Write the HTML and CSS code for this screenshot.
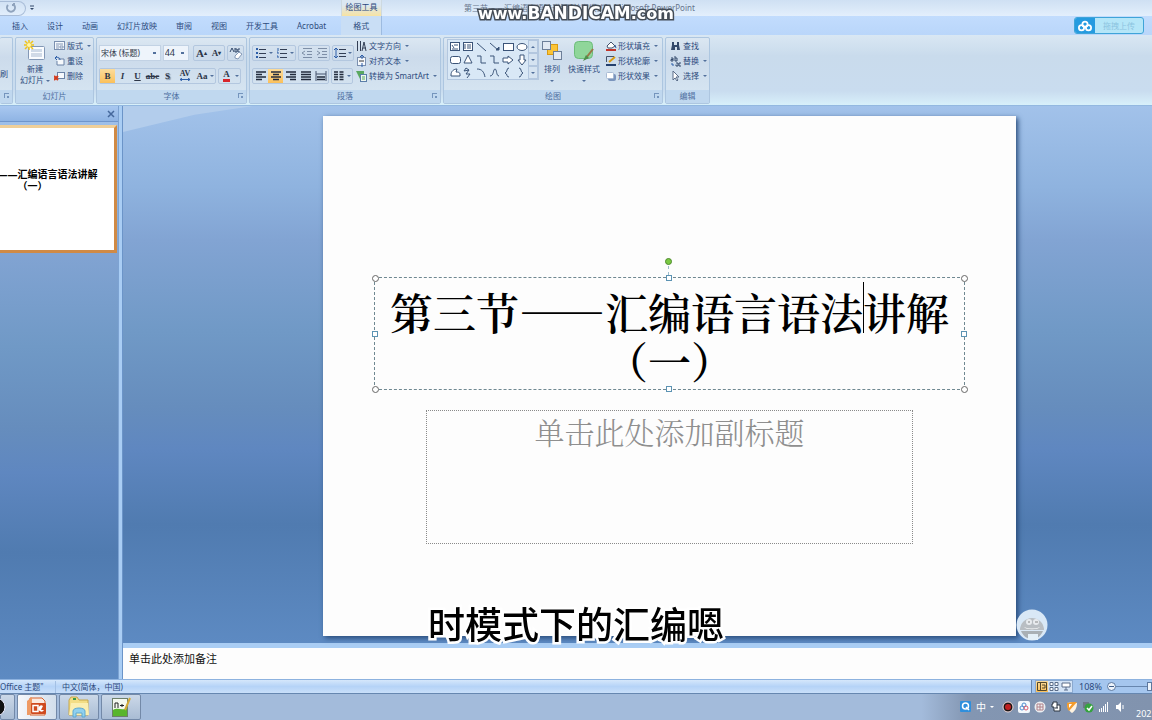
FILE: index.html
```html
<!DOCTYPE html>
<html lang="zh-CN">
<head>
  <meta charset="UTF-8">
  <meta name="viewport" content="width=device-width, initial-scale=1.0">
  <title>Microsoft PowerPoint</title>
  <link rel="stylesheet" href="styles.css">
</head>
<body>
  <!-- Title bar -->
  <header class="title-bar">
    <div class="quick-access">
      <button aria-label="恢复"><svg width="12" height="12" viewBox="0 0 12 12"><path d="M3 3a4 4 0 1 0 6 0M9 3V1M9 3H7" fill="none" stroke="#8fa3bd" stroke-width="2"/></svg></button>
    </div>
    <button class="customize" aria-label="自定义"><svg width="6" height="6" viewBox="0 0 6 6"><path d="M1 1h4" stroke="#33496b"/><path d="M1 3h4l-2 2z" fill="#33496b"/></svg></button>
    <div class="context-title">绘图工具</div>
    <div class="window-title">第三节——汇编语言语法讲解 [兼容模式] - Microsoft PowerPoint</div>
  </header>

  <!-- Ribbon tabs -->
  <nav class="tabs">
    <a href="#">插入</a>
    <a href="#">设计</a>
    <a href="#">动画</a>
    <a href="#">幻灯片放映</a>
    <a href="#">审阅</a>
    <a href="#">视图</a>
    <a href="#">开发工具</a>
    <a href="#">Acrobat</a>
    <a href="#" class="context-tab">格式</a>
    <button class="upload">
      <span class="upload-icon"><svg width="14" height="12" viewBox="0 0 16 12"><g fill="none" stroke="#fff" stroke-width="2"><circle cx="8" cy="4" r="3"/><circle cx="4" cy="8" r="3"/><circle cx="12" cy="8" r="3"/></g></svg></span>
      <span class="upload-text">拖拽上传</span>
    </button>
  </nav>

  <!-- Ribbon -->
  <div class="ribbon">
    <section class="group group-clipboard">
      <div class="group-body"><span class="cut-label">刷</span></div>
      <div class="group-label"><i class="launcher"></i></div>
    </section>

    <section class="group group-slides">
      <div class="group-body">
        <button class="big-button">
          <svg width="22" height="22" viewBox="0 0 22 22"><rect x="4.500" y="6.500" width="16" height="13" rx="1" fill="#fafcff" stroke="#8398b6"/><rect x="7" y="9" width="11" height="3" fill="#cfdae8"/><path d="M7 14h11M7 16h11" stroke="#a7b8cf"/><path d="M5 0v10M0 5h10M1 1l8 8M9 1L1 9" stroke="#f0c419" stroke-width="1.500"/><circle cx="5" cy="5" r="2" fill="#fff6a8"/></svg>
          <span>新建</span>
          <span>幻灯片 <i class="arrow"></i></span>
        </button>
        <div class="menu-column">
          <button><svg width="12" height="10" viewBox="0 0 12 10"><rect x=".5" y=".5" width="10" height="8" fill="#f6f9fd" stroke="#7b90b0"/><path d="M2 3h7M2 5h3M2 7h3M6 5h3v2H6z" stroke="#8296b5" fill="none"/></svg>版式 <i class="arrow"></i></button>
          <button><svg width="12" height="10" viewBox="0 0 12 10"><path d="M4 3h6v6H3V5" fill="#f6f9fd" stroke="#6b82a6"/><path d="M6 4C6 1 3 1 1 2M1 2l2-2M1 2l2 2" fill="none" stroke="#2d5ea8"/></svg>重设</button>
          <button><svg width="12" height="10" viewBox="0 0 12 10"><rect x="3.500" y="1.500" width="7" height="6" fill="#f6f9fd" stroke="#6b82a6"/><path d="M0 5l4 4M4 5L0 9" stroke="#d43a1c" stroke-width="2"/></svg>删除</button>
        </div>
      </div>
      <div class="group-label">幻灯片</div>
    </section>

    <section class="group group-font">
      <div class="group-body rows">
        <div class="row">
          <select class="font-name" aria-label="字体"><option>宋体 (标题)</option></select>
          <select class="font-size" aria-label="字号"><option>44</option></select>
          <div class="tool-set gap-left">
            <button class="serif large" aria-label="增大字号">A<sup>▴</sup></button>
            <button class="serif" aria-label="缩小字号">A<sup>▾</sup></button>
          </div>
          <div class="tool-set">
            <button aria-label="清除格式"><svg width="14" height="14" viewBox="0 0 14 14"><path d="M1 6l2-4 2 4M6 2v4h2V3H6M11 3H9v3h2" fill="none" stroke="#33496b"/><path d="M6 10l4-4 3 2-4 5-3-1z" fill="#fff" stroke="#8398b6"/></svg></button>
          </div>
        </div>
        <div class="row">
          <div class="tool-set">
            <button class="serif active"><b>B</b></button>
            <button class="serif"><i>I</i></button>
            <button class="serif"><u>U</u></button>
            <button class="serif"><s>abc</s></button>
            <button class="serif shadow"><b>S</b></button>
            <button class="serif small-text wide" aria-label="字符间距">AV<svg width="12" height="3" viewBox="0 0 12 3"><path d="M1 1.500h10M3 0L1 1.500 3 3M9 0l2 1.500L9 3" fill="none" stroke="#2d5ea8"/></svg></button>
            <button class="serif wide">Aa<i class="arrow"></i></button>
          </div>
          <div class="tool-set">
            <button class="serif font-color" aria-label="字体颜色"><b>A</b></button>
            <button class="narrow" aria-label="更多颜色"><i class="arrow"></i></button>
          </div>
        </div>
      </div>
      <div class="group-label">字体<i class="launcher"></i></div>
    </section>

    <section class="group group-paragraph">
      <div class="group-body">
        <div class="rows">
          <div class="row">
            <div class="tool-set">
              <button aria-label="项目符号"><svg width="12" height="10" viewBox="0 0 12 10"><path d="M1 1h2M1 5h2M1 9h2" stroke="#2d5ea8" stroke-width="2"/><path d="M4 1.500h7M4 5.500h7M4 9.500h7" stroke="#333f55"/></svg></button>
              <button class="narrow" aria-label="更多符号"><i class="arrow"></i></button>
              <button aria-label="编号"><svg width="12" height="10" viewBox="0 0 12 10"><path d="M2 0v3M1 4h1v2M1 8h1v2" stroke="#2d5ea8" fill="none"/><path d="M4 1.500h7M4 5.500h7M4 9.500h7" stroke="#333f55"/></svg></button>
              <button class="narrow" aria-label="更多编号"><i class="arrow"></i></button>
            </div>
            <div class="tool-set">
              <button class="dim" aria-label="减少缩进"><svg width="12" height="10" viewBox="0 0 12 10"><path d="M2 .5h9M6 3.500h5M6 6.500h5M2 9.500h9M4 3L1 5l3 2" stroke="#5b6d89" fill="none"/></svg></button>
              <button class="dim" aria-label="增加缩进"><svg width="12" height="10" viewBox="0 0 12 10"><path d="M2 .5h9M6 3.500h5M6 6.500h5M2 9.500h9M1 3l3 2-3 2" stroke="#5b6d89" fill="none"/></svg></button>
            </div>
            <div class="tool-set">
              <button class="wide" aria-label="行距"><svg width="12" height="12" viewBox="0 0 12 12"><path d="M2 1v10M0 3l2-2 2 2M0 9l2 2 2-2" stroke="#2d5ea8" fill="none"/><path d="M5 2.500h7M5 6.500h7M5 9.500h7" stroke="#333f55"/></svg><i class="arrow"></i></button>
            </div>
          </div>
          <div class="row">
            <div class="tool-set">
              <button aria-label="左对齐"><svg width="12" height="10" viewBox="0 0 12 10"><path d="M1 1h10M1 3.500h6M1 6h10M1 8.500h6" stroke="#222b3c" stroke-width="1.500"/></svg></button>
              <button class="active" aria-label="居中"><svg width="12" height="10" viewBox="0 0 12 10"><path d="M1 1h10M3 3.500h6M1 6h10M3 8.500h6" stroke="#222b3c" stroke-width="1.500"/></svg></button>
              <button aria-label="右对齐"><svg width="12" height="10" viewBox="0 0 12 10"><path d="M1 1h10M5 3.500h6M1 6h10M5 8.500h6" stroke="#222b3c" stroke-width="1.500"/></svg></button>
              <button aria-label="两端对齐"><svg width="12" height="10" viewBox="0 0 12 10"><path d="M1 1h10M1 3.500h10M1 6h10M1 8.500h10" stroke="#222b3c" stroke-width="1.500"/></svg></button>
              <button aria-label="分散对齐"><svg width="12" height="10" viewBox="0 0 12 10"><path d="M1 0v10M11 0v10M1 3h10" stroke="#44536c"/><path d="M2 6h8M2 8.500h8" stroke="#222b3c" stroke-width="1.500"/></svg></button>
            </div>
            <div class="tool-set">
              <button class="wide" aria-label="分栏"><svg width="12" height="10" viewBox="0 0 12 10"><path d="M1 1h4M1 3.500h4M1 6h4M1 8.500h4M6.500 1h4M6.500 3.500h4M6.500 6h4M6.500 8.500h4" stroke="#222b3c" stroke-width="1.500"/></svg><i class="arrow"></i></button>
            </div>
          </div>
        </div>
        <div class="menu-column">
          <button><svg width="12" height="12" viewBox="0 0 12 12"><path d="M1.500 1v10M4.500 1v10M6 11l2-9 2 9M7 8h3" stroke="#333f55" fill="none"/></svg>文字方向 <i class="arrow"></i></button>
          <button><svg width="12" height="12" viewBox="0 0 12 12"><rect x="1.500" y="2.500" width="8" height="8" fill="#f6f9fd" stroke="#7b90b0"/><path d="M6 0v4M4 2l2-2 2 2M6 12V8" stroke="#2d5ea8" fill="none"/><path d="M3 6h5" stroke="#333"/></svg>对齐文本 <i class="arrow"></i></button>
          <button><svg width="12" height="12" viewBox="0 0 12 12"><path d="M0 1h8v3H4v5z" fill="#5aa860"/><rect x="4.500" y="4.500" width="6" height="7" fill="#eef7ee" stroke="#5b7da8"/><path d="M6 7h3M6 9h3" stroke="#5aa860"/></svg>转换为 SmartArt <i class="arrow"></i></button>
        </div>
      </div>
      <div class="group-label">段落<i class="launcher"></i></div>
    </section>

    <section class="group group-drawing">
      <div class="group-body">
        <div class="gallery">
          <svg class="shapes" width="80" height="39" viewBox="0 0 80 39">
            <g fill="#fff" stroke="#3b5478">
              <rect x="2.500" y="2.500" width="9" height="8"/>
              <rect x="15.500" y="2.500" width="9" height="8"/>
              <path d="M29 3l9 8M42 3l8 7" fill="none"/>
              <rect x="55.500" y="3.500" width="10" height="7"/>
              <ellipse cx="74" cy="7" rx="5" ry="3.500"/>
              <rect x="2.500" y="16.500" width="10" height="7" rx="2"/>
              <path d="M20 15l4 8h-8z"/>
              <path d="M29 16h4v7h5M42 16h4v7h5" fill="none"/>
              <path d="M55 18h5v-2l5 4-5 4v-2h-5zM72 15h4v5h2l-4 5-4-5h2z"/>
              <path d="M3 35c0-4 3-6 6-6l-1 3c4 0 4 1 4 4H3z"/>
              <path d="M18 28l-2 3 5-1-3 4 4 0-3 4M18 28l3 2" fill="none"/>
              <path d="M29 29c5 0 7 3 8 8M42 36c4 0 3-7 5-7s1 7 4 7M61 28c-3 0-1 4-4 5 3 1 1 4 4 4M71 28c3 0 1 4 4 5-3 1-1 4-4 4" fill="none"/>
            </g>
            <path d="M4 5l2 3M6 5h4M4 9h6M17 4v5M20 4v5M22 4v5M48 10h3V7z" stroke="#3b5478" fill="#3b5478"/>
          </svg>
          <div class="gallery-scroll">
            <button aria-label="上"><i class="arrow up"></i></button>
            <button aria-label="下"><i class="arrow"></i></button>
            <button aria-label="其他"><i class="arrow"></i></button>
          </div>
        </div>
        <button class="big-button">
          <svg width="22" height="22" viewBox="0 0 22 22"><rect x="6.500" y="4.500" width="10" height="10" fill="#fbc436" stroke="#d99a12"/><rect x="1.500" y="1.500" width="8" height="8" fill="#e2e9f2" stroke="#6d7f99"/><rect x="12.500" y="11.500" width="8" height="8" fill="#e2e9f2" stroke="#6d7f99"/></svg>
          <span>排列</span>
          <span><i class="arrow"></i></span>
        </button>
        <button class="big-button style-button">
          <svg width="22" height="22" viewBox="0 0 22 22"><rect x="1.500" y="1.500" width="18" height="17" rx="4" fill="#8fd69a" stroke="#6dbd7b"/><path d="M20 9l-7 9" stroke="#9a7647" stroke-width="2"/><path d="M13 15l3 3-6 3z" fill="#4f8f4b"/></svg>
          <span>快速样式</span>
          <span><i class="arrow"></i></span>
        </button>
        <div class="menu-column">
          <button><svg width="12" height="12" viewBox="0 0 12 12"><path d="M2 6l4-4 4 4-3 2H3z" fill="#fff" stroke="#44536c"/><path d="M10 5l1 3" stroke="#2d5ea8"/><rect x="1" y="9" width="10" height="2" fill="#c2342a"/></svg>形状填充 <i class="arrow"></i></button>
          <button><svg width="12" height="12" viewBox="0 0 12 12"><path d="M1.500 7V1.500H9" fill="none" stroke="#44536c"/><path d="M4 7l6-5" stroke="#d99a12" stroke-width="2"/><rect x="1" y="9" width="10" height="2" fill="#24406e"/></svg>形状轮廓 <i class="arrow"></i></button>
          <button><svg width="12" height="12" viewBox="0 0 12 12"><rect x="3" y="4" width="8" height="7" rx="2" fill="#7b95bd"/><rect x="1.500" y="2.500" width="7" height="6" rx="1" fill="#fff" stroke="#a9bbd4"/></svg>形状效果 <i class="arrow"></i></button>
        </div>
      </div>
      <div class="group-label">绘图<i class="launcher"></i></div>
    </section>

    <section class="group group-editing">
      <div class="group-body">
        <div class="menu-column">
          <button><svg width="12" height="12" viewBox="0 0 12 12"><path d="M2 2h2v3h3V2h2v3l1 5H7V7H5v3H1l1-5z" fill="#33496b"/></svg>查找</button>
          <button><svg width="12" height="12" viewBox="0 0 12 12"><path d="M1 3h2v3H1V4.500h2M5 1v5h2V3H5" fill="none" stroke="#33496b"/><path d="M6 8h2v3H6V9.500M11 8H9v3h2" fill="none" stroke="#33496b"/><path d="M2 8v2h2" fill="none" stroke="#2d5ea8"/></svg>替换 <i class="arrow"></i></button>
          <button><svg width="12" height="12" viewBox="0 0 12 12"><path d="M3 1l6 6H6l2 3-1 1-2-3-2 2z" fill="#fff" stroke="#5b6d89"/></svg>选择 <i class="arrow"></i></button>
        </div>
      </div>
      <div class="group-label">编辑</div>
    </section>
  </div>

  <!-- Workspace: slide list and editor -->
  <main class="workspace">
    <aside class="slide-panel">
      <div class="panel-header">
        <button aria-label="关闭"><svg width="8" height="8" viewBox="0 0 8 8"><path d="M1 1l6 6M7 1L1 7" stroke="#45689c" stroke-width="1.500"/></svg></button>
      </div>
      <div class="thumb-list">
        <div class="thumb">第三节——汇编语言语法讲解<br>（一）</div>
      </div>
    </aside>
    <div class="editor">
      <div class="canvas">
        <div class="slide">
          <div class="title-box">
            <h1>第三节——汇编语言语法<span class="caret"></span>讲解<br>（一）</h1>
            <i class="rotate"></i>
            <i class="handle corner nw"></i><i class="handle n"></i><i class="handle corner ne"></i>
            <i class="handle w"></i><i class="handle e"></i>
            <i class="handle corner sw"></i><i class="handle s"></i><i class="handle corner se"></i>
          </div>
          <div class="subtitle-box">单击此处添加副标题</div>
        </div>
        <div class="mascot">
          <svg width="32" height="32" viewBox="0 0 32 32"><circle cx="16" cy="16" r="15.500" fill="#d9e8f6"/><path d="M4 21a12 12 0 1 1 24 0z" fill="#b9bec3"/><path d="M5 22h22c-2 5-6 8-11 8S7 27 5 22z" fill="#a9b0b5"/><circle cx="13" cy="13" r="3" fill="#e8ebee"/><circle cx="20" cy="13" r="3" fill="#e8ebee"/><path d="M13 12v2M19 13h3" stroke="#888"/><path d="M8 18c5 2 11 2 16 0-2 3-14 3-16 0z" fill="#fff"/><path d="M12 25h10v6H12z" fill="#e4f0f8"/></svg>
        </div>
      </div>
      <div class="notes">单击此处添加备注</div>
    </div>
  </main>

  <!-- Status bar -->
  <div class="status-bar">
    <span class="theme">Office 主题"</span>
    <span class="language">中文(简体，中国)</span>
    <div class="status-right">
      <div class="view-buttons">
        <button class="active" aria-label="普通视图"><svg width="10" height="9" viewBox="0 0 10 9"><path d="M.5.500h9v8h-9zM3.500 1v7M5 3h3v3H5" fill="none" stroke="#54482a"/></svg></button>
        <button aria-label="幻灯片浏览"><svg width="10" height="9" viewBox="0 0 10 9"><path d="M1 .5h3v3H1zM6 .5h3v3H6zM1 5.500h3v3H1zM6 5.500h3v3H6z" fill="#fff" stroke="#5b6d89"/></svg></button>
        <button aria-label="放映"><svg width="10" height="9" viewBox="0 0 10 9"><path d="M1 1h8v4H1zM5 5v3M3 8h4" fill="#fff" stroke="#5b6d89"/></svg></button>
      </div>
      <span class="zoom-value">108%</span>
      <button class="zoom-out" aria-label="缩小"></button>
      <input type="range" class="zoom-range" aria-label="显示比例" min="0" max="100" value="100">
    </div>
  </div>

  <!-- Windows taskbar -->
  <footer class="taskbar">
    <button class="task task-cut" aria-label="录制"><svg width="20" height="20" viewBox="0 0 20 20"><circle cx="10" cy="10" r="9" fill="#111" stroke="#eef"/><circle cx="9" cy="10" r="4" fill="#b32020"/></svg></button>
    <button class="task current" aria-label="PowerPoint"><svg width="22" height="22" viewBox="0 0 22 22"><path d="M4 2h12l3 3v14H4z" fill="#fbe9df" stroke="#d8622a"/><path d="M1 5l5-4v15l-3 3H1z" fill="#ef9a63"/><rect x="5" y="7" width="15" height="11" rx="1" fill="#cf4a1e"/><path d="M7 9.500h5v6H7z" fill="none" stroke="#fff" stroke-width="1.500"/><path d="M17 10a3 3 0 1 0 1 4h-3z" fill="#fff"/></svg></button>
    <button class="task" aria-label="资源管理器"><svg width="24" height="22" viewBox="0 0 24 22"><path d="M2 4l2-3h6l2 3h9v15H2z" fill="#f3dd85" stroke="#c8a84a"/><path d="M4 7h17l1 12H2z" fill="#fbeeb0"/><path d="M6 21v-6c0-4 12-4 12 0v6h-3v-4H9v4z" fill="#8fd0ee" stroke="#5fa8d0"/><path d="M6 3h3" stroke="#3a9a4a" stroke-width="2"/></svg></button>
    <button class="task" aria-label="Notepad++"><svg width="22" height="22" viewBox="0 0 22 22"><rect x="2.500" y="2.500" width="15" height="18" fill="#f4f8ee" stroke="#6d7f6a"/><path d="M3 14c5-3 9 1 14-2v8H3z" fill="#58b52b"/><path d="M5 12V7h3v5M10 9.500h4M12 8v3" fill="none" stroke="#222"/><path d="M20 2l-5 12" stroke="#d4a935" stroke-width="2"/></svg></button>
    <div class="tray">
      <svg width="12" height="12" viewBox="0 0 12 12"><rect width="11" height="11" rx="1" fill="#2f8fdc"/><circle cx="5.500" cy="5" r="3" fill="none" stroke="#fff" stroke-width="1.500"/><path d="M6 6l3 3" stroke="#fff" stroke-width="1.500"/></svg>
      <span class="ime">中</span>
      <i class="arrow light"></i>
      <svg width="12" height="12" viewBox="0 0 12 12"><circle cx="6" cy="6" r="5" fill="#1c1414" stroke="#f0d8d8"/><circle cx="6" cy="6" r="3" fill="#c02020"/></svg>
      <svg width="12" height="12" viewBox="0 0 12 12"><rect width="12" height="12" rx="2" fill="#f4f8fc"/><g fill="none" stroke="#4d8fd0"><circle cx="6" cy="4" r="2"/><circle cx="4" cy="7" r="2"/></g><circle cx="8" cy="7" r="2" fill="none" stroke="#e05a6a"/></svg>
      <svg width="12" height="12" viewBox="0 0 12 12"><circle cx="6" cy="6" r="5.500" fill="#eceff2"/><path d="M3 3h6v6H3zM3 6h6M6 3v6" fill="none" stroke="#b08088"/></svg>
      <svg width="12" height="12" viewBox="0 0 12 12"><path d="M3 1h4v3h3v6H4V6H2V3h1z" fill="#fff" stroke="#2b3440"/><path d="M5 7h3M7 4v3" stroke="#2b3440"/></svg>
      <svg width="12" height="12" viewBox="0 0 12 12"><path d="M1 2l5-1 5 1c0 5-2 8-5 10C3 10 1 7 1 2z" fill="#fff3e0"/><path d="M11 1L3 10C1 8 1 5 1 2l5-1z" fill="#f39b2c"/><path d="M3 3l3 0-3 4z" fill="#fff"/></svg>
      <svg width="12" height="12" viewBox="0 0 12 12"><rect x="1" y="1" width="6" height="6" fill="#6d7886"/><circle cx="7" cy="7" r="4.500" fill="#35a33e"/><path d="M5 7l2 2 3-4" fill="none" stroke="#fff" stroke-width="1.500"/></svg>
      <svg width="12" height="12" viewBox="0 0 12 12"><path d="M1.500 8v3M3.500 7v4M5.500 5v6M7.500 3v8M9.500 1v10" stroke="#fff"/></svg>
      <svg width="12" height="12" viewBox="0 0 12 12"><path d="M2 4h2l3-3v10L4 8H2z" fill="#fff"/><path d="M9 4v4" stroke="#fff"/></svg>
      <span class="clock">202</span>
    </div>
  </footer>

  <!-- Video overlays -->
  <div class="watermark"><small>www.</small>BANDICAM<small>.com</small></div>
  <div class="caption">时模式下的汇编嗯</div>
</body>
</html>
```
FILE: styles.css
```css
:root {
  --ink: #2c4a7c;
  --line: #b3c7df;
  --work: linear-gradient(#a2c2ea 0%, #8fb3df 15%, #82a4d3 25%, #7099c6 42%, #668dbd 56%, #5f87c0 64%, #507bb0 78%, #5d8ac2 100%);
}
* {
  box-sizing: border-box;
}
body {
  display: flex;
  flex-direction: column;
  min-height: 100vh;
  margin: 0;
  overflow: hidden;
  font-family: "Noto Sans", "Noto Sans CJK SC", sans-serif;
  font-size: 8px;
  line-height: 12px;
  text-spacing-trim: space-all;
  color: var(--ink);
  background: #6f98cb;
}
button, select {
  font: inherit;
  color: inherit;
  padding: 0;
  border: none;
  background: none;
  white-space: nowrap;
}
svg {
  display: block;
  flex: none;
}
.arrow {
  display: inline-block;
  flex: none;
  border: 2px solid transparent;
  border-top-color: #52709c;
  border-bottom: none;
  vertical-align: middle;
}
.arrow.up {
  transform: rotate(180deg);
}

/* Title bar */
.title-bar {
  display: flex;
  align-items: center;
  height: 16px;
  background: linear-gradient(#cfe0f3, #e3effc);
}
.quick-access {
  display: flex;
  justify-content: flex-end;
  width: 26px;
  height: 15px;
  padding-right: 8px;
  border: 1px solid #a9bdd8;
  border-left: none;
  border-radius: 0 8px 8px 0;
}
.customize {
  margin-left: 3px;
}
.context-title {
  align-self: stretch;
  width: 41px;
  margin-left: 306px;
  padding-top: 1px;
  text-align: center;
  border: 1px solid #cdd9e0;
  border-width: 0 1px;
  background: linear-gradient(#dbe7f2 30%, #f7e3a2);
}
.window-title {
  margin-left: 82px;
  color: #66758c;
  white-space: nowrap;
}

/* Tabs */
.tabs {
  display: flex;
  align-items: center;
  gap: 19px;
  height: 19px;
  padding: 0 8px 0 12px;
  background: linear-gradient(#c2dcfd, #b9d6fa);
}
.tabs a {
  color: var(--ink);
  text-decoration: none;
  white-space: nowrap;
}
.tabs .context-tab {
  width: 41px;
  margin-left: -4px;
  line-height: 19px;
  text-align: center;
  border-right: 1px solid #9dbbe0;
  background: #c9def5;
}
.upload {
  display: flex;
  width: 70px;
  height: 17px;
  margin-left: auto;
  border: 1px solid #3fa4d8;
  border-radius: 3px;
  background: #b5e6f8;
  overflow: hidden;
}
.upload-icon {
  display: flex;
  align-items: center;
  justify-content: center;
  width: 20px;
  height: 100%;
  background: #259be0;
}
.upload-text {
  flex: 1;
  line-height: 15px;
  color: #8cc4e0;
}

/* Ribbon */
.ribbon {
  display: flex;
  gap: 2px;
  height: 71px;
  padding: 2px 0 1px;
  background: linear-gradient(#d9e7f3, #c9dbec 30%, #c9dcef 80%, #d8f0fa);
  border-bottom: 1px solid #93b8e0;
}
.group {
  display: flex;
  flex-direction: column;
  border: 1px solid #adc6e0;
  border-radius: 2px;
  background: linear-gradient(#dbe7f2, #ccdbeb 30%, #d8e7f3);
}
.group-clipboard {
  width: 13px;
  border-left: none;
}
.group-slides {
  width: 79px;
}
.group-font {
  width: 151px;
}
.group-paragraph {
  width: 192px;
}
.group-drawing {
  width: 220px;
}
.group-editing {
  width: 45px;
}
.group-body {
  display: flex;
  flex: 1;
  min-height: 0;
  padding: 0 2px;
}
.group-label {
  position: relative;
  height: 13px;
  text-align: center;
  color: #4d6f9f;
  background: #c0d8ef;
}
.launcher {
  position: absolute;
  right: 3px;
  top: 3px;
  width: 5px;
  height: 5px;
  border: 1px solid #7595bd;
  border-width: 1px 0 0 1px;
}
.launcher::after {
  content: "";
  position: absolute;
  right: 0;
  bottom: 0;
  width: 2px;
  height: 2px;
  background: #7595bd;
}
.cut-label {
  margin: auto 0 10px -2px;
}
.big-button {
  display: flex;
  flex-direction: column;
  align-items: center;
  justify-content: flex-start;
  width: 34px;
  padding-top: 2px;
  line-height: 11px;
}
.big-button svg {
  margin-bottom: 1px;
}
.menu-column {
  display: flex;
  flex-direction: column;
  justify-content: flex-start;
  padding-left: 2px;
}
.menu-column button {
  display: flex;
  align-items: center;
  gap: 1px;
  height: 15px;
}
.menu-column .arrow {
  margin-left: 3px;
}
.rows {
  display: flex;
  flex-direction: column;
  justify-content: center;
  gap: 7px;
}
.row {
  display: flex;
  gap: 2px;
}
.tool-set {
  display: flex;
  height: 16px;
  border: 1px solid var(--line);
  border-radius: 2px;
}
.tool-set.gap-left {
  margin-left: 2px;
}
.tool-set button {
  display: flex;
  align-items: center;
  justify-content: center;
  width: 15px;
  color: #2d3648;
}
.tool-set button.narrow {
  width: 6px;
}
.tool-set button.wide {
  width: 20px;
  gap: 2px;
}
.tool-set button.active,
.view-buttons .active {
  background: linear-gradient(#fbdc9c, #fbc05a);
}
.tool-set .dim {
  opacity: 0.7;
}
.tool-set .serif {
  font-family: "Liberation Serif", serif;
  font-size: 9px;
  font-weight: bold;
}
.tool-set .serif.large {
  font-size: 11px;
}
.serif sup {
  font-size: 6px;
}
.serif.shadow {
  text-shadow: 1px 1px 1px #68758a;
}
.tool-set .small-text {
  flex-direction: column;
  gap: 0;
  font-size: 8px;
  line-height: 8px;
}
.tool-set button.small-text {
  gap: 0;
}
.font-color b {
  line-height: 10px;
  border-bottom: 3px solid #d8262c;
}
.font-name, .font-size {
  appearance: none;
  height: 16px;
  padding-left: 1px;
  color: #2d3648;
  border: 1px solid #c2d2e4;
  background: linear-gradient(#52709c, #52709c) right 4px center / 3px 2px no-repeat #eef4fb;
}
.font-name {
  width: 66px;
}
.font-size {
  width: 28px;
  font-size: 9px;
}
.gallery {
  display: flex;
  height: 41px;
  margin: 1px 0 0 1px;
  border: 1px solid var(--line);
  background: #d9e8f6;
}
.gallery-scroll {
  display: flex;
  flex-direction: column;
  width: 10px;
}
.gallery-scroll button {
  display: flex;
  flex: 1;
  align-items: center;
  justify-content: center;
  border: 1px solid var(--line);
  background: #d5e3f1;
}
.group-drawing .big-button {
  width: 26px;
}
.group-drawing .style-button {
  width: 38px;
}

/* Workspace */
.workspace {
  display: flex;
  flex: 1;
  min-height: 0;
  background: #a9cdf4;
}
.slide-panel {
  display: flex;
  flex-direction: column;
  width: 119px;
  margin-right: 3px;
  overflow: hidden;
  border-right: 1px solid #7da3d2;
  background: var(--work);
}
.panel-header {
  display: flex;
  align-items: center;
  justify-content: flex-end;
  height: 16px;
  padding-right: 3px;
  background: linear-gradient(#a9c8f0, #8fb4e4);
  border-bottom: 1px solid #7096cc;
}
.thumb-list {
  display: flex;
  justify-content: flex-end;
  padding: 3px 1px;
}
.thumb {
  flex: none;
  width: 169px;
  height: 128px;
  padding-top: 40px;
  font-size: 10px;
  font-weight: bold;
  line-height: 12px;
  text-align: center;
  color: #000;
  border: 3px solid #d08a45;
  border-top-color: #f0cf98;
  background: #fff;
}
.editor {
  display: flex;
  flex: 1;
  flex-direction: column;
  min-width: 0;
  border-left: 1px solid #6b94c8;
}
.canvas {
  position: relative;
  display: flex;
  flex: 1;
  justify-content: center;
  min-height: 0;
  padding: 10px 0 7px 64px;
  background: var(--work);
}
/* Light swoosh in the corner */
.canvas::before {
  content: "";
  position: absolute;
  left: 0;
  top: 0;
  width: 130px;
  height: 26px;
  background: #b3cdec;
  clip-path: polygon(0 0, 100% 0, 55% 34%, 0 100%);
}
.slide {
  position: relative;
  flex: none;
  height: 100%;
  aspect-ratio: 4 / 3;
  padding: 161px 51px 0;
  background: #fdfdfd;
  box-shadow: 2px 2px 5px #274a78;
}
.title-box {
  position: relative;
  height: 113px;
  padding-top: 9px;
  border: 1px dashed #6f8891;
}
.title-box h1 {
  margin: 0;
  font-family: "Noto Serif CJK SC", "Noto Sans CJK SC", serif;
  font-size: 43px;
  font-weight: 600;
  line-height: 49px;
  text-align: center;
  white-space: nowrap;
  color: #000;
}
/* Out of flow so the text around it does not move */
.caret {
  position: absolute;
  top: 4px;
  width: 1px;
  height: 51px;
  background: #000;
}
.handle {
  position: absolute;
  width: 6px;
  height: 6px;
  margin: -3px;
  border: 1px solid #5c93b3;
  background: #fff;
}
.handle.corner {
  width: 7px;
  height: 7px;
  border-color: #666;
  border-radius: 50%;
}
.nw, .n, .ne { top: 0; }
.sw, .s, .se { top: 100%; }
.w, .e { top: 50%; }
.nw, .w, .sw { left: 0; }
.n, .s { left: 50%; }
.ne, .e, .se { left: 100%; }
.rotate {
  position: absolute;
  left: 50%;
  top: -20px;
  width: 7px;
  height: 7px;
  margin-left: -4px;
  border: 1px solid #4d8a2c;
  border-radius: 50%;
  background: #7ac943;
}
.rotate::after {
  content: "";
  position: absolute;
  left: 2px;
  top: 7px;
  height: 9px;
  border-left: 1px dashed #9dbccc;
}
.subtitle-box {
  height: 134px;
  margin: 20px 52px 0;
  font-family: "Noto Serif CJK SC", "Noto Sans CJK SC", serif;
  font-size: 30px;
  font-weight: 300;
  line-height: 40px;
  text-align: center;
  color: #8f8f8f;
  border: 1px dotted #8a8a8a;
}
.mascot {
  position: absolute;
  right: 104px;
  bottom: 2px;
}
.notes {
  height: 31px;
  margin-top: 5px;
  padding: 5px 6px;
  font-size: 11px;
  color: #111;
  background: #fdfdfd;
}

/* Status bar */
.status-bar {
  display: flex;
  align-items: center;
  height: 15px;
  border-top: 1px solid #8db2df;
  border-bottom: 1px solid #6687b0;
  background: linear-gradient(#d5e7fb, #b5d3f7 50%, #c9dffa);
  overflow: hidden;
}
.theme {
  width: 56px;
  border-right: 1px solid #a3c0e4;
}
.language {
  margin-left: 6px;
}
.status-right {
  display: flex;
  align-items: center;
  gap: 6px;
  height: 100%;
  margin-left: auto;
  padding-left: 3px;
  border-left: 1px solid #6687b0;
  background: #a5c6ee;
}
.view-buttons {
  display: flex;
  border: 1px solid #8ba9cf;
  background: #d3e3f6;
}
.view-buttons button {
  display: flex;
  align-items: center;
  justify-content: center;
  width: 12px;
  height: 11px;
}
.zoom-value {
  width: 22px;
  font-size: 9px;
}
.zoom-out {
  width: 9px;
  height: 9px;
  border: 1px solid #5c789f;
  border-radius: 50%;
  background: linear-gradient(#3e5c87, #3e5c87) center / 5px 1px no-repeat #eef4fb;
}
.zoom-range {
  appearance: none;
  width: 36px;
  height: 10px;
  margin: 0 0 0 -6px;
  background: linear-gradient(#6786ae, #6786ae) center / 100% 1px no-repeat;
}
.zoom-range::-webkit-slider-thumb {
  appearance: none;
  width: 5px;
  height: 9px;
  border: 1px solid #5c789f;
  background: #eef4fb;
}

/* Taskbar */
.taskbar {
  display: flex;
  gap: 2px;
  height: 26px;
  background: linear-gradient(90deg, #a3bbdb 0, #a3bbdb 80%, #8396b2 84%, #8193ae 100%);
  overflow: hidden;
}
.task {
  display: flex;
  align-items: center;
  justify-content: center;
  width: 40px;
  border: 1px solid #7389a8;
  border-radius: 2px;
  background: linear-gradient(#cbd8e8, #a9bcd4);
}
.task.current {
  background: linear-gradient(90deg, #f6f8fb, #d2deeb);
}
.task-cut {
  justify-content: flex-end;
  width: 15px;
  padding-right: 8px;
}
.tray {
  display: flex;
  align-items: center;
  gap: 4px;
  margin-left: auto;
  color: #fff;
}
.ime {
  font-size: 10px;
}
.arrow.light {
  margin-right: 4px;
  border-top-color: #fff;
}
.clock {
  align-self: flex-end;
  width: 16px;
  margin-left: 6px;
  font-size: 9px;
}

/* Video overlays */
.watermark, .caption {
  position: fixed;
  left: 0;
  right: 0;
  text-align: center;
  pointer-events: none;
}
.watermark {
  top: 3px;
  font-family: "DejaVu Sans", sans-serif;
  font-size: 17px;
  font-weight: bold;
  line-height: 20px;
  color: #fff;
  -webkit-text-stroke: 3px #444c56;
  paint-order: stroke fill;
}
.watermark small {
  font-size: 16px;
}
.caption {
  bottom: 70px;
  font-family: "Noto Sans CJK SC", sans-serif;
  font-size: 37px;
  font-weight: 500;
  line-height: 54px;
  color: #000;
  -webkit-text-stroke: 5px #fff;
  paint-order: stroke fill;
}
```
